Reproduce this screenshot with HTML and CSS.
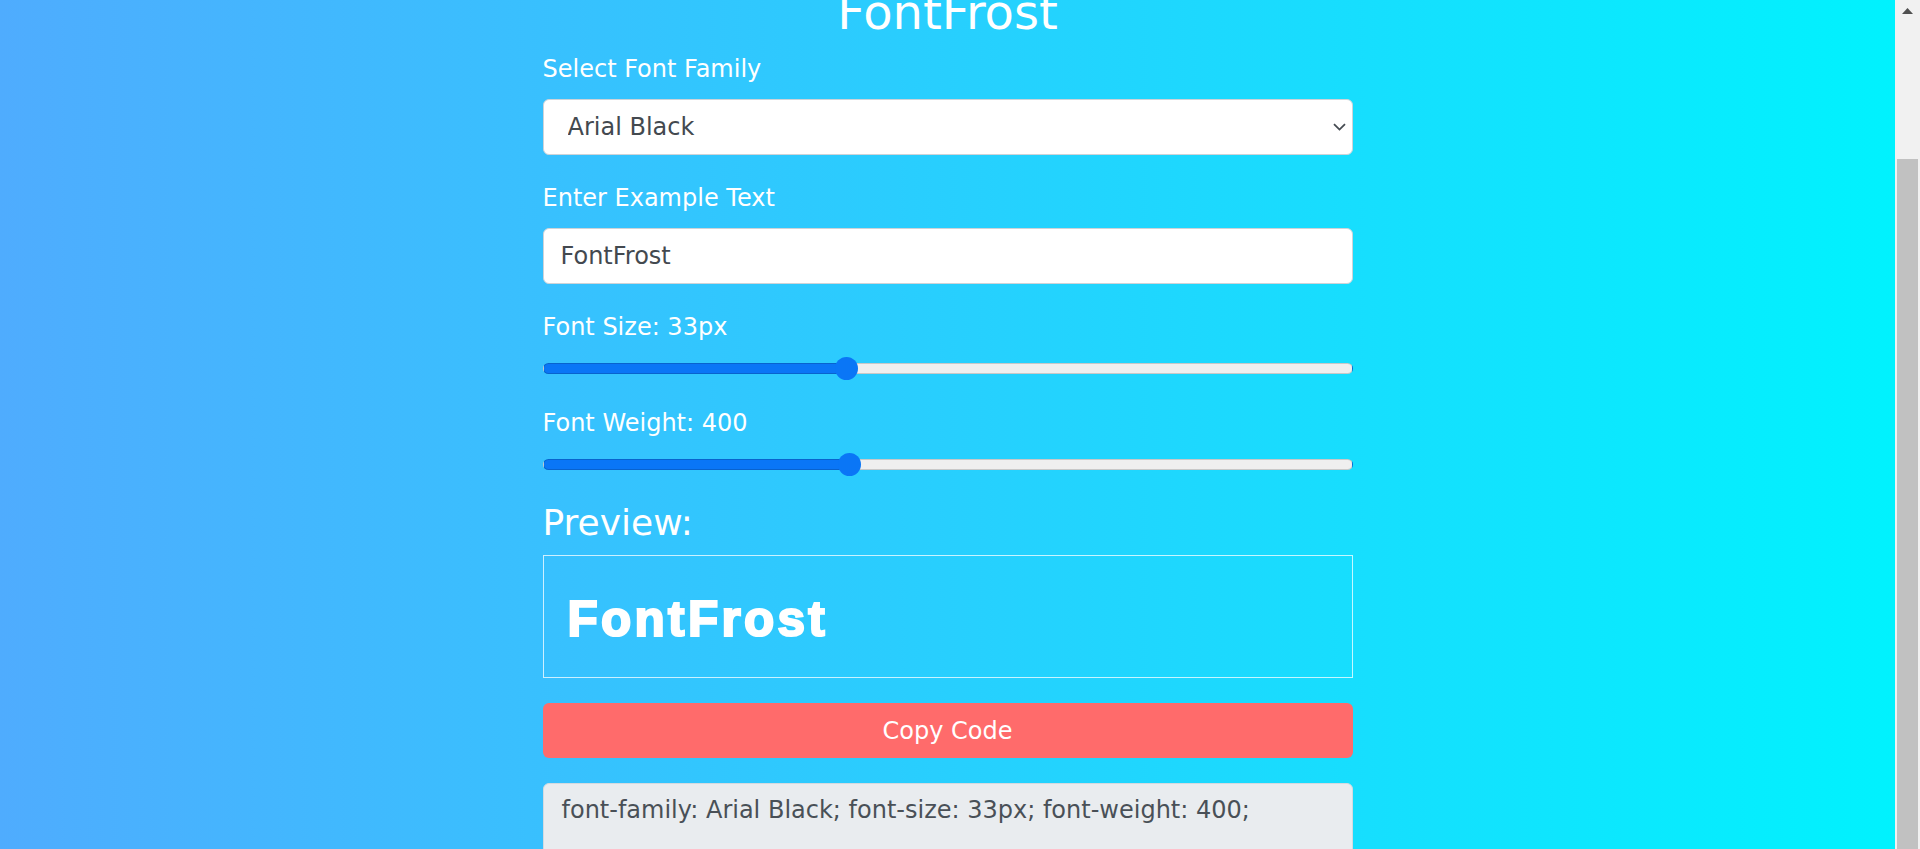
FILE: index.html
```html
<!DOCTYPE html>
<html lang="en">
<head>
<meta charset="utf-8">
<title>FontFrost</title>
<link rel="stylesheet" href="styles.css">
</head>
<body>
<main class="app">
  <h1 class="title">FontFrost</h1>
  <div class="controls">
    <div class="field">
      <label class="field-label" for="family">Select Font Family</label>
      <div class="select-wrap">
        <select id="family" class="select">
          <option>Arial Black</option>
          <option>Arial</option>
          <option>Verdana</option>
          <option>Georgia</option>
        </select>
        <svg class="chevron" width="13" height="8" viewBox="0 0 13 8" aria-hidden="true"><path d="M1 1.2L6.5 6.6L12 1.2"/></svg>
      </div>
    </div>
    <div class="field">
      <label class="field-label" for="sample">Enter Example Text</label>
      <input id="sample" class="text-input" type="text" value="FontFrost">
    </div>
    <div class="field">
      <label class="field-label" for="size">Font Size: 33px</label>
      <input id="size" class="range" type="range" min="10" max="72" value="33" style="--fill:37.5%">
    </div>
    <div class="field">
      <label class="field-label" for="weight">Font Weight: 400</label>
      <input id="weight" class="range" type="range" min="100" max="900" step="100" value="400" style="--fill:37.9%">
    </div>
  </div>
  <h2 class="preview-heading">Preview:</h2>
  <div class="preview"><span class="preview-text">FontFrost</span></div>
  <button class="copy-btn" type="button">Copy Code</button>
  <div class="code">font-family: Arial Black; font-size: 33px; font-weight: 400;</div>
</main>
<div class="scrollbar" aria-hidden="true">
  <div class="scrollbar-up">
    <svg width="11" height="6" viewBox="0 0 11 6"><path d="M5.5 0L11 6H0Z"/></svg>
  </div>
  <div class="scrollbar-thumb"></div>
</div>
<script src="script.js"></script>
</body>
</html>
```
FILE: styles.css
```css
html {
  scrollbar-width: none;
}
html::-webkit-scrollbar {
  display: none;
}

body {
  margin: 0;
  padding-right: 25px;
  font-family: "DejaVu Sans", Verdana, sans-serif;
  font-size: 24px;
  color: #ffffff;
  background: linear-gradient(to right, #4facfe 0, #00f2fe calc(100% - 25px));
}

.app {
  width: 810px;
  margin: 0 auto;
  padding: 149px 0 60px;
}

.title {
  margin: 0 0 15px;
  font-size: 48px;
  font-weight: normal;
  line-height: normal;
  text-align: center;
}

.controls {
  display: flex;
  flex-direction: column;
  gap: 29px;
}

.field {
  display: flex;
  flex-direction: column;
}

.field-label {
  display: block;
  margin-bottom: 16px;
  line-height: normal;
}

.select-wrap {
  position: relative;
}

.select,
.text-input {
  box-sizing: border-box;
  width: 100%;
  height: 56px;
  margin: 0;
  border: 1px solid #cdd3d8;
  border-radius: 6px;
  background: #ffffff;
  font-family: inherit;
  font-size: 24px;
  color: #43494f;
  outline: none;
}

.select {
  -webkit-appearance: none;
  appearance: none;
  padding: 0 40px 0 24px;
}

.text-input {
  padding: 0 17px;
}

.chevron {
  position: absolute;
  right: 7px;
  top: 50%;
  transform: translateY(-50%);
  pointer-events: none;
}
.chevron path {
  fill: none;
  stroke: #454b52;
  stroke-width: 1.8;
}

.range {
  -webkit-appearance: none;
  appearance: none;
  width: 100%;
  height: 23px;
  margin: 0;
  background: transparent;
}
.range::-webkit-slider-runnable-track {
  box-sizing: border-box;
  height: 11px;
  border-radius: 6px;
  border: 1px solid rgba(0, 0, 0, 0.16);
  background: linear-gradient(to right, #0a76f6 var(--fill), #efefef var(--fill));
}
.range::-webkit-slider-thumb {
  -webkit-appearance: none;
  appearance: none;
  width: 23px;
  height: 23px;
  margin-top: -7px;
  border: none;
  border-radius: 50%;
  background: #0a76f6;
}

.preview-heading {
  margin: 26px 0 12px;
  font-size: 36px;
  font-weight: normal;
  line-height: normal;
}

.preview {
  box-sizing: border-box;
  height: 123px;
  padding: 38px 24px 0;
  border: 1px solid rgba(255, 255, 255, 0.75);
}

.preview-text {
  display: block;
  font-family: "Arial Black", "Liberation Sans", Arial, sans-serif;
  font-size: 49.5px;
  font-weight: 900;
  line-height: 1;
  letter-spacing: 3.3px;
  -webkit-text-stroke: 2.2px #ffffff;
  color: #ffffff;
}

.copy-btn {
  display: block;
  width: 100%;
  height: 55px;
  margin: 25px 0;
  padding: 0;
  border: none;
  border-radius: 6px;
  background: #ff6b6b;
  color: #ffffff;
  font-family: inherit;
  font-size: 24px;
  cursor: pointer;
}

.code {
  padding: 12px 18px 40px;
  border: 1px solid #d3dae0;
  border-radius: 6px;
  background: #e9ecef;
  color: #495057;
  line-height: normal;
}

.scrollbar {
  position: fixed;
  top: 0;
  right: 0;
  width: 25px;
  height: 100vh;
  display: flex;
  flex-direction: column;
  background: #f1f1f1;
}
.scrollbar-up {
  height: 25px;
  flex: none;
  display: flex;
  justify-content: center;
  padding-top: 8px;
  box-sizing: border-box;
}
.scrollbar-up path {
  fill: #505050;
}
.scrollbar-thumb {
  flex: 1;
  margin: 134px 2px 0;
  background: #c1c1c1;
}
```
FILE: script.js
```js
function placeScroll() {
  window.scrollTo(0, 165);
}
placeScroll();
window.addEventListener('load', placeScroll);
```
